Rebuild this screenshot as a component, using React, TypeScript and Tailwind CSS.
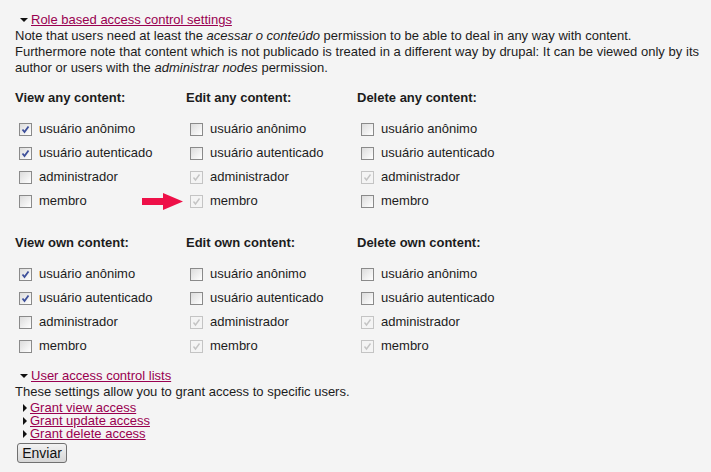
import React from "react";

type Box = { label: string; checked: boolean; disabled?: boolean };

const roles = ["usuário anônimo", "usuário autenticado", "administrador", "membro"];

function mk(checked: boolean[], disabled: boolean[] = [false, false, false, false]): Box[] {
  return roles.map((label, i) => ({ label, checked: checked[i], disabled: disabled[i] }));
}

const anyCols = [
  { title: "View any content:", boxes: mk([true, true, false, false]) },
  { title: "Edit any content:", boxes: mk([false, false, true, true], [false, false, true, true]) },
  { title: "Delete any content:", boxes: mk([false, false, true, false], [false, false, true, false]) },
];

const ownCols = [
  { title: "View own content:", boxes: mk([true, true, false, false]) },
  { title: "Edit own content:", boxes: mk([false, false, true, true], [false, false, true, true]) },
  { title: "Delete own content:", boxes: mk([false, false, true, true], [false, false, true, true]) },
];

function CheckBox({ checked, disabled }: { checked: boolean; disabled?: boolean }) {
  return (
    <span
      className={
        "relative inline-block w-[13px] h-[13px] border shrink-0 " +
        (disabled
          ? "border-[#c4c4c4] bg-[#f4f4f4]"
          : "border-[#8a8a8a] bg-gradient-to-br from-[#dcdcdc] to-[#ffffff]")
      }
    >
      {checked && (
        <svg viewBox="0 0 11 11" className="absolute inset-0 w-[11px] h-[11px]">
          <path
            d="M2.5 5.5 L4.5 8 L8.5 2.5"
            fill="none"
            stroke={disabled ? "#c4c4c4" : "#3d4f9a"}
            strokeWidth={disabled ? 1.4 : 1.8}
          />
        </svg>
      )}
    </span>
  );
}

function Down() {
  return (
    <svg width="8" height="5" viewBox="0 0 8 5" className="mr-[3px]">
      <path d="M0 0 L8 0 L4 4 Z" fill="#111" />
    </svg>
  );
}

function Right() {
  return (
    <svg width="4" height="8" viewBox="0 0 4 8" className="mr-[3px] ml-[3px]">
      <path d="M0 0 L4 4 L0 8 Z" fill="#111" />
    </svg>
  );
}

function Grid({ cols, arrow }: { cols: { title: string; boxes: Box[] }[]; arrow?: boolean }) {
  return (
    <div className="flex">
      {cols.map((c, ci) => (
        <div key={c.title} className="w-[171px] relative">
          <div className="font-bold leading-4">{c.title}</div>
          <div className="mt-[11px]">
            {c.boxes.map((b, i) => (
              <div key={b.label} className="h-6 flex items-center pl-1 relative">
                <CheckBox checked={b.checked} disabled={b.disabled} />
                <span className="ml-[7px]">{b.label}</span>
                {arrow && ci === 1 && i === 3 && (
                  <svg
                    width="41"
                    height="17"
                    viewBox="0 0 41 17"
                    className="absolute left-[-44px] top-[4px]"
                  >
                    <path d="M0 5 L21 5 L21 0 L41 8.5 L21 17 L21 12 L0 12 Z" fill="#ee1048" />
                  </svg>
                )}
              </div>
            ))}
          </div>
        </div>
      ))}
    </div>
  );
}

export default function App() {
  return (
    <div
      className="min-h-screen bg-[#f4f4f4] text-[#1c1c1c] text-[13px] leading-4 px-[15px] pt-[12px]"
      style={{ fontFamily: '"Liberation Sans", Arial, sans-serif' }}
    >
      <div className="flex items-center pl-[5px]">
        <Down />
        <a href="#" className="text-[#990050] underline">
          Role based access control settings
        </a>
      </div>
      <p className="w-[684px] text-justify">
        Note that users need at least the <em>acessar o conteúdo</em> permission to be able to deal in any
        way with content.
        <br />
        Furthermore note that content which is not publicado is treated in a different way by drupal: It
        can be viewed only by its author or users with the <em>administrar nodes</em> permission.
      </p>
      <div className="mt-[14px]">
        <Grid cols={anyCols} arrow />
      </div>
      <div className="mt-[22px]">
        <Grid cols={ownCols} />
      </div>
      <div className="mt-[10px] flex items-center pl-[5px]">
        <Down />
        <a href="#" className="text-[#990050] underline">
          User access control lists
        </a>
      </div>
      <p>These settings allow you to grant access to specific users.</p>
      <div className="mt-px">
        {["Grant view access", "Grant update access", "Grant delete access"].map((g) => (
          <div key={g} className="flex items-center leading-[13px] h-[13px] pl-[5px]">
            <Right />
            <a href="#" className="text-[#990050] underline">
              {g}
            </a>
          </div>
        ))}
      </div>
      <button className="mt-[3px] ml-[2px] h-5 w-[50px] border border-[#707070] rounded-[3px] bg-gradient-to-b from-[#f2f2f2] to-[#d6d6d6] text-[14px] leading-4 text-[#111]">
        Enviar
      </button>
    </div>
  );
}
